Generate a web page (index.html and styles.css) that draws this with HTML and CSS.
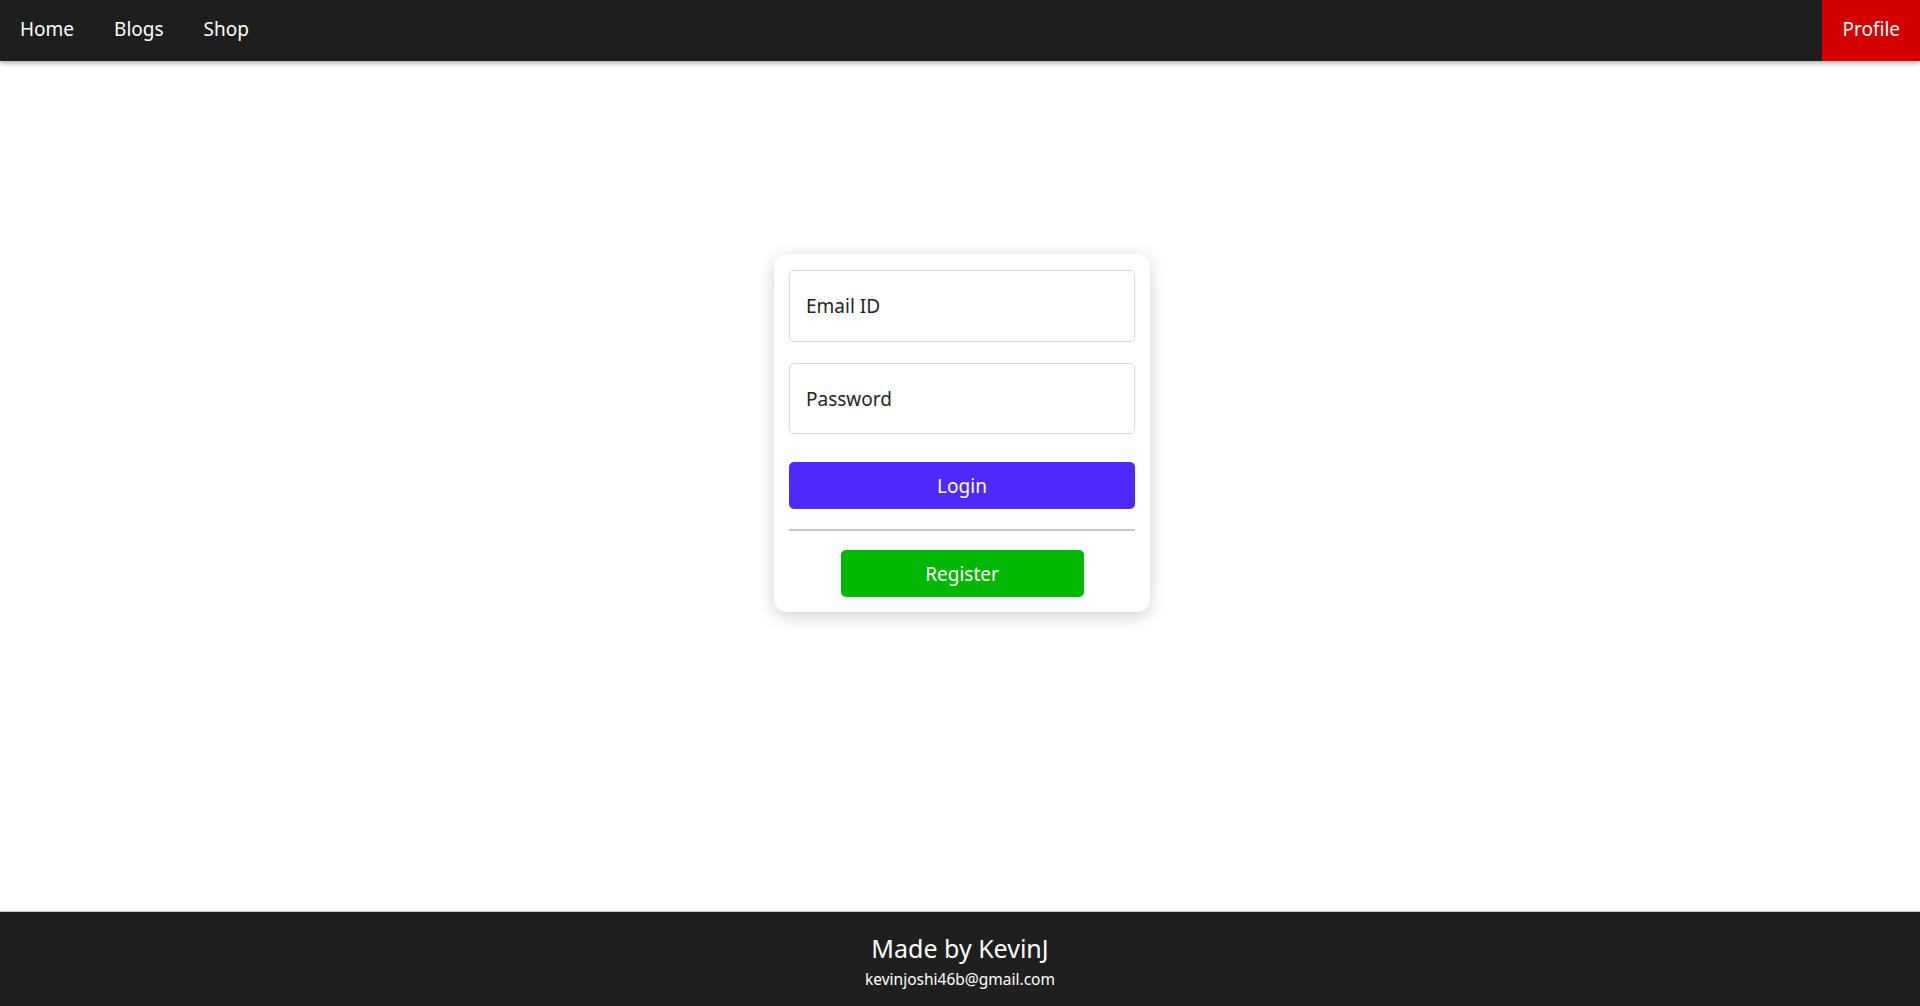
FILE: index.html
```html
<!DOCTYPE html>
<html lang="en">
<head>
<meta charset="utf-8">
<title>Login</title>
<link rel="stylesheet" href="styles.css">
</head>
<body>
<nav class="navbar">
  <div class="nav-links">
    <a class="nav-link" href="#">Home</a>
    <a class="nav-link" href="#">Blogs</a>
    <a class="nav-link" href="#">Shop</a>
  </div>
  <a class="nav-profile" href="#">Profile</a>
</nav>
<main class="main">
  <form class="card">
    <input class="field" type="email" placeholder="Email ID">
    <input class="field" type="password" placeholder="Password">
    <button class="btn btn-login" type="button">Login</button>
    <hr class="divider">
    <button class="btn btn-register" type="button">Register</button>
  </form>
</main>
<footer class="footer">
  <div class="footer-title">Made by KevinJ</div>
  <div class="footer-mail">kevinjoshi46b@gmail.com</div>
</footer>
</body>
</html>
```
FILE: styles.css
```css
* { box-sizing: border-box; }
html, body { margin: 0; padding: 0; }
body {
  font-family: "Noto Sans", "Open Sans", sans-serif;
  min-height: 100vh;
  display: flex;
  flex-direction: column;
  background: #fff;
  color: #212529;
}
.navbar {
  height: 61px;
  background: #1e1e1e;
  display: flex;
  justify-content: space-between;
  align-items: stretch;
  box-shadow: 0 2px 5px rgba(0,0,0,0.35);
  position: relative;
  z-index: 2;
}
.nav-links { display: flex; align-items: stretch; }
.nav-link, .nav-profile {
  color: #fff;
  text-decoration: none;
  font-size: 19px;
  display: flex;
  align-items: center;
  padding: 0 20px 4px;
}
.nav-profile { background: #d40000; }
.main {
  flex: 1;
  display: flex;
  justify-content: center;
  align-items: flex-start;
  padding: 193px 0 0 4px;
}
.card {
  width: 376px;
  background: #fff;
  border-radius: 13px;
  box-shadow: 0 4px 18px rgba(0,0,0,0.18);
  padding: 16px 15px 15px;
  display: flex;
  flex-direction: column;
}
.field {
  height: 72px;
  border: 1px solid #d6d8dc;
  border-radius: 5px;
  padding: 0 16px;
  font-family: inherit;
  font-size: 19px;
  color: #212529;
  outline: none;
}
.field::placeholder { color: #212529; opacity: 1; }
.field + .field { margin-top: 21px; height: 71px; }
.btn {
  height: 47px;
  border: none;
  border-radius: 5px;
  color: #fff;
  font-family: inherit;
  font-size: 19px;
  cursor: pointer;
}
.btn-login { background: #4f29ff; margin-top: 28px; }
.divider {
  width: 100%;
  margin: 20px 0 0;
  border: none;
  height: 2px;
  background: #c8c8c8;
}
.btn-register {
  background: #00b800;
  width: 243px;
  align-self: center;
  margin-top: 19px;
}
.footer {
  height: 95px;
  background: #1f1f1f;
  border-top: 1px solid #c6c6c6;
  color: #fff;
  display: flex;
  flex-direction: column;
  align-items: center;
  padding-top: 20px;
}
.footer-title { font-size: 25px; line-height: 32px; }
.footer-mail { font-size: 15.5px; line-height: 24px; margin-top: 3px; }
```
